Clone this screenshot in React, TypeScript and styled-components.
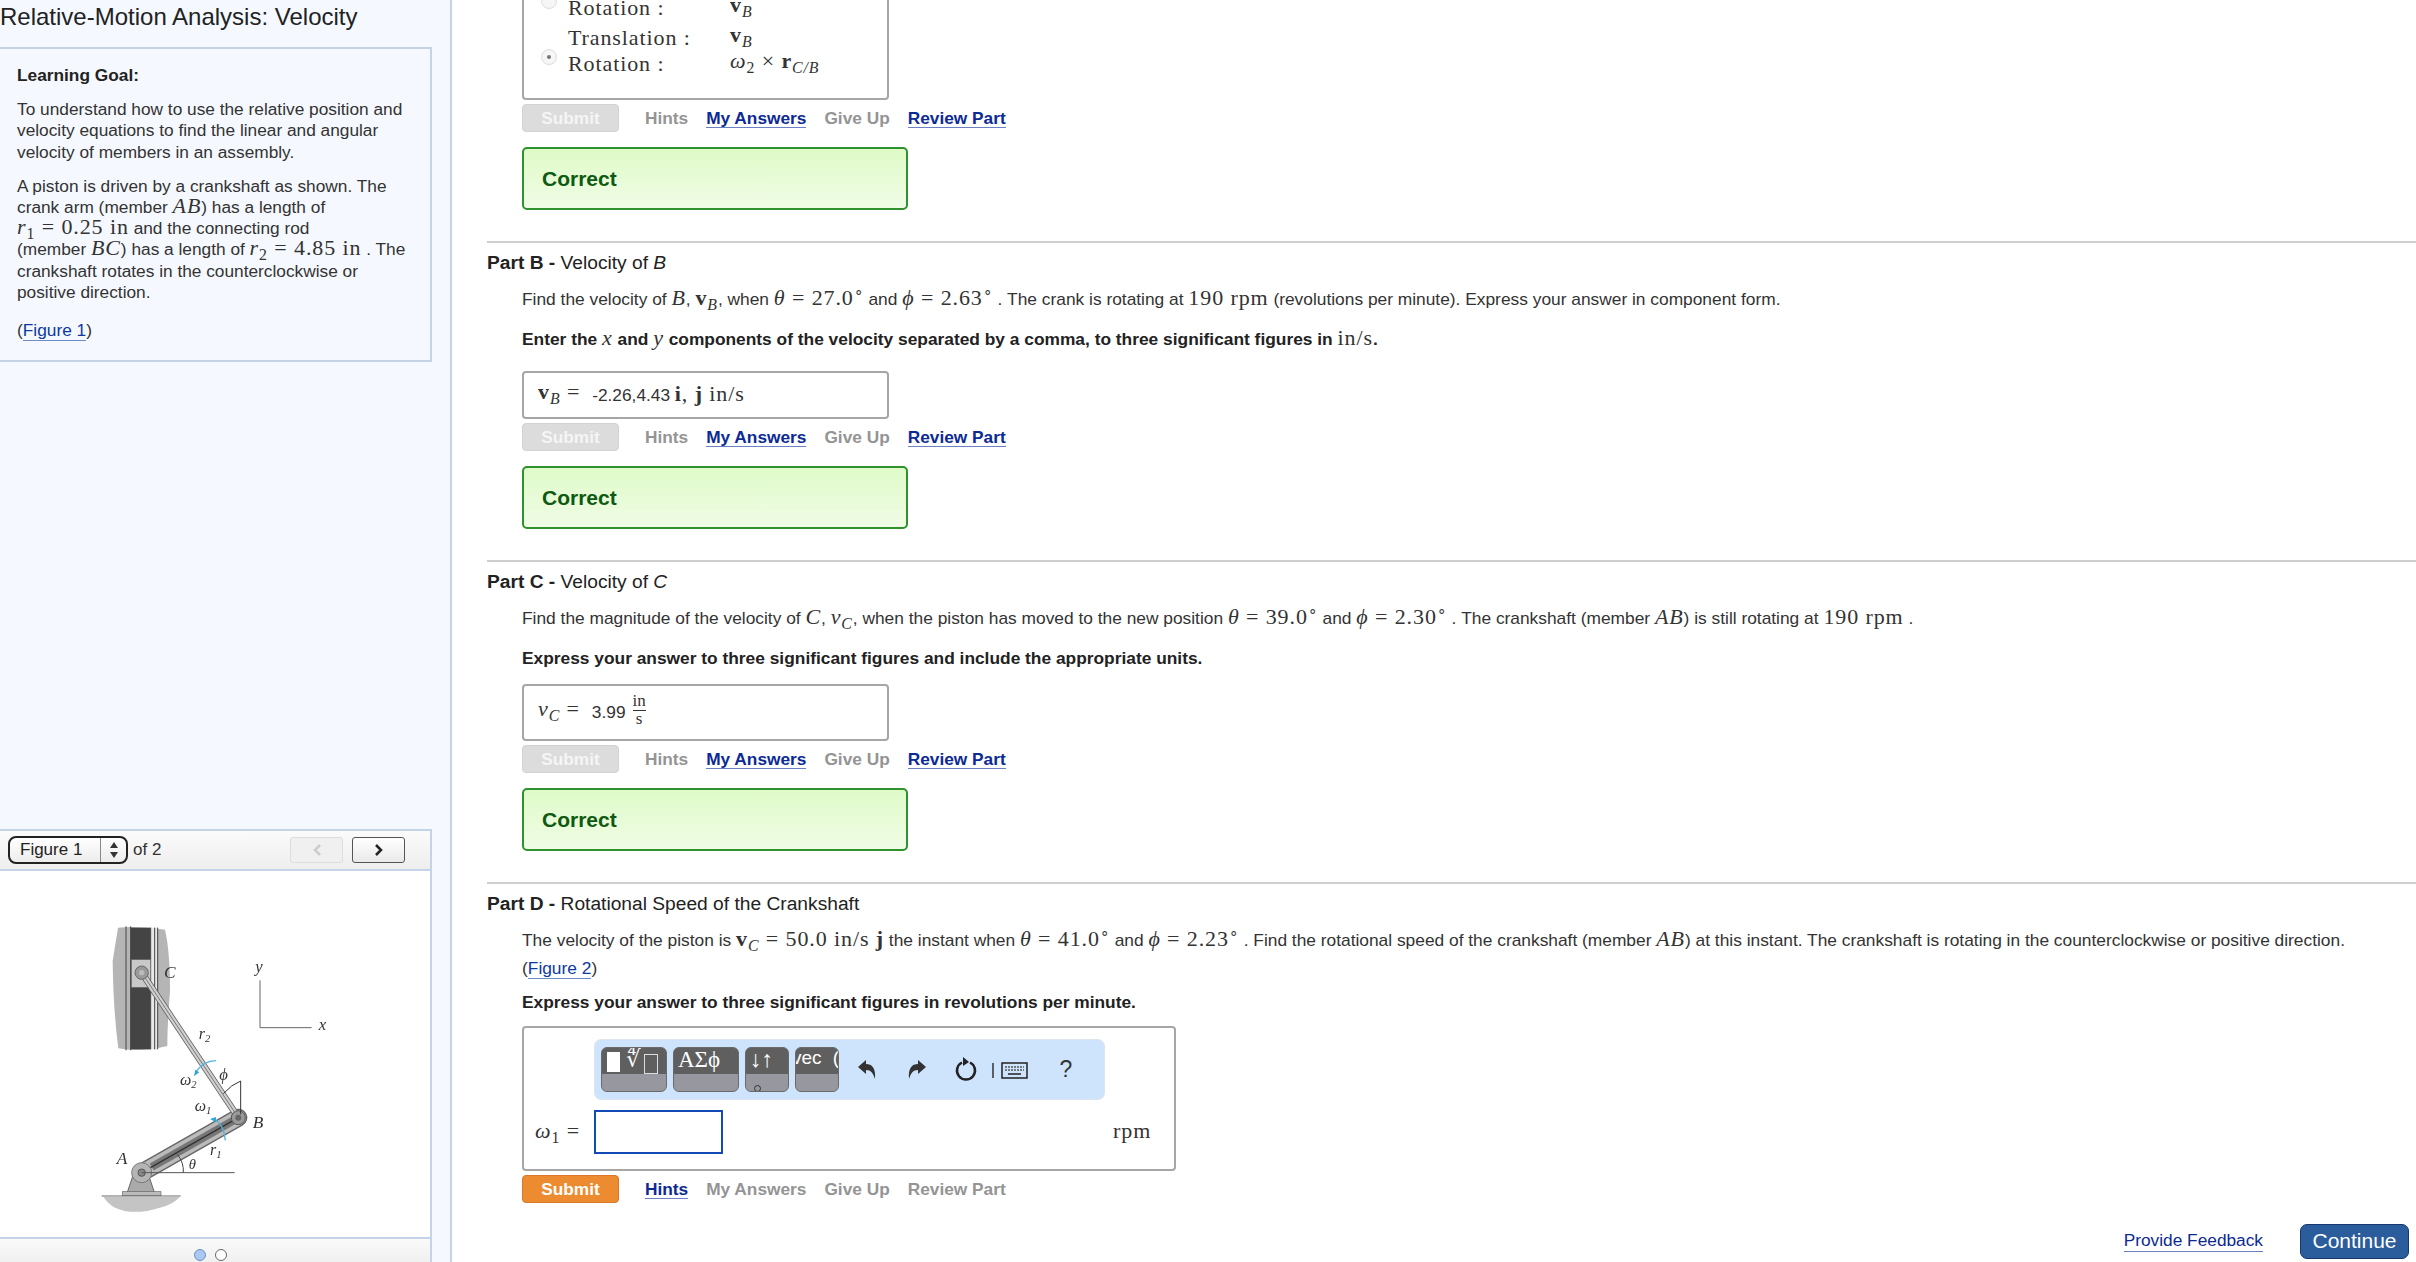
import styled, { createGlobalStyle } from "styled-components";

const GlobalStyle = createGlobalStyle`
  html, body { margin: 0; padding: 0; background: #fff; }
  body { font-family: "Liberation Sans", Arial, sans-serif; color: #222; }
`;

const Page = styled.div`
  display: flex;
  width: 2416px;
  height: 1262px;
  overflow: hidden;
`;

const Sidebar = styled.aside`
  flex: 0 0 452px;
  box-sizing: border-box;
  height: 1262px;
  display: flex;
  flex-direction: column;
  padding-right: 18px;
  background: #f5f9ff;
  border-right: 2px solid #c4d3e6;
`;

const Title = styled.h1`
  margin: 0;
  height: 47px;
  font-size: 24px;
  line-height: 34px;
  font-weight: normal;
  color: #222;
  white-space: nowrap;
`;

const GoalBox = styled.div`
  box-sizing: border-box;
  height: 315px;
  padding: 16px 0 0 17px;
  border: 2px solid #c4d3e6;
  border-left: 0;
  font-size: 17.3px;
  line-height: 21.2px;
  color: #333;
  white-space: nowrap;
`;

const GoalHeading = styled.div`
  font-weight: bold;
  color: #222;
`;

const GoalText = styled.p<{ $top: number }>`
  margin: ${(p) => p.$top}px 0 0;
`;

const FigurePanel = styled.section`
  margin-top: auto;
  height: 431px;
  display: flex;
  flex-direction: column;
  border: solid #c4d3e6;
  border-width: 2px 2px 0 0;
`;

const FigureBar = styled.div`
  flex: 0 0 38px;
  display: flex;
  align-items: center;
  padding-left: 8px;
  background: linear-gradient(#fbfbfb, #eeeeee);
  border-bottom: 2px solid #c4d3e6;
  font-size: 17px;
  color: #333;
`;

const FigureSelect = styled.div`
  box-sizing: border-box;
  width: 120px;
  height: 28px;
  display: flex;
  align-items: center;
  justify-content: space-between;
  padding-left: 10px;
  margin-right: 5px;
  border: 2px solid #222;
  border-radius: 8px;
  background: linear-gradient(#fff, #ececec);
  color: #222;
`;

const SelectArrows = styled.span`
  width: 25px;
  height: 24px;
  display: flex;
  align-items: center;
  justify-content: center;
  border-left: 1px solid #888;
`;

const NavButton = styled.button<{ $off?: boolean; $left: number }>`
  width: 53px;
  height: 26px;
  margin-left: ${(p) => p.$left}px;
  padding: 0;
  display: flex;
  align-items: center;
  justify-content: center;
  border-radius: 3px;
  background: ${(p) => (p.$off ? "#f0f0f0" : "linear-gradient(#fff, #e9e9e9)")};
  border: ${(p) => (p.$off ? "1px solid #ddd" : "1px solid #555")};
`;

const FigureImage = styled.div`
  flex: 1;
  display: flex;
  background: #fff;
  padding: 40px 0 0 90px;
`;

const FigureDrawing = styled.svg`
  filter: blur(0.6px);
`;

const FigureDots = styled.div`
  flex: 0 0 22px;
  display: flex;
  align-items: flex-end;
  justify-content: center;
  gap: 9px;
  background: linear-gradient(#fafafa, #f0f0f0);
  border-top: 2px solid #c4d3e6;
  padding: 0 10px 1px 0;
`;

const Dot = styled.span<{ $on?: boolean }>`
  box-sizing: border-box;
  width: 12px;
  height: 12px;
  border-radius: 50%;
  border: 1.5px solid ${(p) => (p.$on ? "#6f93bd" : "#666")};
  background: ${(p) => (p.$on ? "#a9c8f2" : "#fff")};
`;

const Main = styled.main`
  flex: 1;
  min-width: 0;
  padding-left: 35px;
  font-size: 17.35px;
  color: #333;
`;

const Part = styled.section`
  box-sizing: border-box;
  border-top: 2px solid #cfcfcf;
  padding-top: 9px;
`;

const PartTop = styled.section``;

const PartTitle = styled.h2`
  margin: 0;
  font-size: 19.2px;
  line-height: 22px;
  font-weight: normal;
  color: #222;
  b { font-weight: bold; }
`;

const PartBody = styled.div`
  padding-left: 35px;
`;

const Statement = styled.p`
  margin: 11px 0 0;
  line-height: 28px;
  white-space: nowrap;
`;

const Instruction = styled.p<{ $top: number }>`
  margin: ${(p) => p.$top}px 0 0;
  line-height: 24px;
  font-weight: bold;
  color: #222;
  white-space: nowrap;
`;

const Math = styled.span`
  font-family: "Liberation Serif", serif;
  font-size: 22px;
  letter-spacing: 0.9px;
  line-height: 0;
  font-weight: normal;
  color: #333;
`;

const V = styled.i`
  font-family: "Liberation Serif", serif;
`;

const Vec = styled.b`
  font-family: "Liberation Serif", serif;
  font-weight: bold;
`;

const Sub = styled.sub`
  font-size: 0.72em;
  line-height: 0;
  vertical-align: -0.3em;
`;

const Degree = styled.sup`
  font-size: 0.7em;
  line-height: 0;
  vertical-align: 0.55em;
`;

const AnswerBox = styled.div<{ $top: number; $height: number }>`
  box-sizing: border-box;
  width: 367px;
  height: ${(p) => p.$height}px;
  margin-top: ${(p) => p.$top}px;
  display: flex;
  align-items: center;
  padding-left: 14px;
  gap: 12px;
  border: 2px solid #a6a6a6;
  border-radius: 4px;
  background: #fff;
  font-size: 17.3px;
`;

const ChoiceBox = styled.div`
  box-sizing: border-box;
  width: 367px;
  height: 140px;
  margin-top: -40px;
  padding: 7px 0 0 17px;
  border: 2px solid #a6a6a6;
  border-radius: 4px;
`;

const Choice = styled.div<{ $top?: number }>`
  display: flex;
  align-items: flex-end;
  gap: 11px;
  margin-top: ${(p) => p.$top ?? 0}px;
`;

const Radio = styled.span<{ $on?: boolean }>`
  box-sizing: border-box;
  flex: 0 0 16px;
  height: 16px;
  margin-bottom: 12px;
  display: flex;
  align-items: center;
  justify-content: center;
  border-radius: 50%;
  border: 1px solid #ddd;
  background: #f6f6f6;
  &::after {
    content: "";
    display: ${(p) => (p.$on ? "block" : "none")};
    width: 4px;
    height: 4px;
    border-radius: 50%;
    background: #777;
  }
`;

const ChoiceLines = styled.div`
  display: grid;
  grid-template-columns: 162px auto;
  grid-auto-rows: 26px;
  align-items: center;
`;

const ActionRow = styled.div`
  height: 28px;
  margin-top: 4px;
  display: flex;
  align-items: center;
`;

const SubmitButton = styled.button<{ $active?: boolean }>`
  box-sizing: border-box;
  width: 97px;
  height: 28px;
  margin-right: 26px;
  padding: 0;
  border-radius: 4px;
  font: bold 17.3px "Liberation Sans", sans-serif;
  color: ${(p) => (p.$active ? "#fff" : "#f5f5f5")};
  background: ${(p) => (p.$active ? "#ec8b2f" : "#dcdcdc")};
  border: 1px solid ${(p) => (p.$active ? "#d9772a" : "#d2d2d2")};
`;

const ActionLink = styled.a<{ $on?: boolean }>`
  margin-right: 18px;
  font-size: 17.3px;
  font-weight: bold;
  color: ${(p) => (p.$on ? "#0c2a94" : "#949494")};
  border-bottom: ${(p) => (p.$on ? "1px solid #6c80c4" : "1px solid transparent")};
  line-height: 18px;
`;

const CorrectBox = styled.div`
  box-sizing: border-box;
  width: 386px;
  height: 63px;
  margin: 15px 0 31px;
  display: flex;
  align-items: center;
  padding-left: 18px;
  border: 2px solid #2f922f;
  border-radius: 5px;
  background: linear-gradient(#dffbc8, #f0fce6);
  font-size: 21px;
  font-weight: bold;
  color: #0e5a12;
`;

const FigureLink = styled.a`
  color: #0c3aa0;
  border-bottom: 1px solid #6c8bc8;
`;

const Fraction = styled.span`
  display: inline-flex;
  flex-direction: column;
  align-items: center;
  margin: -6px 0 0 -5px;
  font-family: "Liberation Serif", serif;
  font-size: 17px;
  line-height: 16px;
  color: #333;
`;

const FractionTop = styled.span`
  border-bottom: 1px solid #333;
  padding-bottom: 1px;
`;

const MathEditor = styled.div`
  box-sizing: border-box;
  width: 654px;
  height: 145px;
  margin-top: 12px;
  padding: 11px 0 0 70px;
  border: 2px solid #a6a6a6;
  border-radius: 4px;
`;

const Toolbar = styled.div`
  box-sizing: border-box;
  width: 511px;
  height: 61px;
  display: flex;
  align-items: center;
  padding-left: 6px;
  border: 1px solid #dfe5ec;
  border-radius: 7px;
  background: #cee4fd;
`;

const PaletteButton = styled.div<{ $width: number }>`
  box-sizing: border-box;
  position: relative;
  flex: 0 0 ${(p) => p.$width}px;
  height: 45px;
  margin-right: 6px;
  overflow: hidden;
  border: 1px solid #6a6a6a;
  border-radius: 6px;
  background: linear-gradient(#5f5f5f 0, #5f5f5f 60%, #97979f 60%, #97979f 100%);
  color: #fff;
  font-family: "Liberation Serif", serif;
  font-size: 23px;
  line-height: 24px;
  white-space: nowrap;
  display: flex;
  padding-left: 4px;
  gap: 3px;
`;

const WhiteSquare = styled.span`
  flex: 0 0 13px;
  height: 20px;
  margin: 4px 3px 0 1px;
  background: #fff;
`;

const OutlineSquare = styled.span`
  flex: 0 0 12px;
  height: 18px;
  margin-top: 6px;
  border: 1px solid #ddd;
`;

const VecLabel = styled.span`
  font-family: "Liberation Sans", sans-serif;
  font-size: 19px;
  margin-left: -8px;
  line-height: 20px;
  word-spacing: 6px;
`;

const SmallCircle = styled.span`
  position: absolute;
  left: 8px;
  bottom: -1px;
  width: 5px;
  height: 5px;
  border: 1px solid #333;
  border-radius: 50%;
`;

const ToolIcon = styled.span<{ $width: number }>`
  flex: 0 0 ${(p) => p.$width}px;
  display: flex;
  align-items: center;
  justify-content: center;
  color: #333;
  font-size: 23px;
`;

const EntryRow = styled.div`
  display: flex;
  align-items: center;
  height: 44px;
  margin: 10px 0 0 -62px;
`;

const EntryLabel = styled.span`
  flex: 0 0 59px;
  padding-left: 3px;
`;

const EntryInput = styled.div`
  box-sizing: border-box;
  width: 129px;
  height: 44px;
  border: 2px solid #1449b8;
  background: #fff;
`;

const EntryUnit = styled.span`
  margin-left: 390px;
`;

const Footer = styled.div`
  height: 36px;
  margin-top: 20px;
  display: flex;
  align-items: center;
  justify-content: flex-end;
  padding-right: 7px;
  gap: 37px;
`;

const FeedbackLink = styled.a`
  font-size: 17.3px;
  color: #0c2a94;
  border-bottom: 1px solid #6c80c4;
`;

const ContinueButton = styled.button`
  box-sizing: border-box;
  width: 109px;
  height: 35px;
  padding: 0;
  border: 1px solid #16386d;
  border-radius: 7px;
  background: #2b5c9b;
  color: #fff;
  font: 21px "Liberation Sans", sans-serif;
`;

function Actions({ active, review = true, answers = true }: { active?: boolean; review?: boolean; answers?: boolean }) {
  return (
    <ActionRow>
      <SubmitButton $active={active}>Submit</SubmitButton>
      <ActionLink $on={active}>Hints</ActionLink>
      <ActionLink $on={answers}>My Answers</ActionLink>
      <ActionLink>Give Up</ActionLink>
      <ActionLink $on={review}>Review Part</ActionLink>
    </ActionRow>
  );
}

function CrankFigure() {
  const label = { fontFamily: "Liberation Serif, serif", fontStyle: "italic", fill: "#333" } as const;
  return (
    <FigureDrawing width="280" height="310" viewBox="0 0 840 930">
      <path d="M84 50 Q140 44 225 56 Q240 120 240 240 Q232 340 232 405 Q150 425 85 412 Q70 300 68 150 Z" fill="#b5b5b5" />
      <rect x="122" y="50" width="60" height="365" fill="#444" />
      <rect x="182" y="50" width="21" height="365" fill="#e8e8e8" />
      <path d="M108 46V418M122 46V418M182 50V415M194 50V415M203 50V415" stroke="#444" strokeWidth="3" />
      <rect x="124" y="146" width="58" height="83" fill="#c9c9c9" stroke="#666" strokeWidth="2" />
      <path d="M155 785 L445 620" stroke="#666" strokeWidth="54" strokeLinecap="round" />
      <path d="M155 785 L445 620" stroke="#bbb" strokeWidth="46" strokeLinecap="round" />
      <path d="M185 768 L445 620" stroke="#777" strokeWidth="24" />
      <path d="M155 785 L445 620" stroke="#333" strokeWidth="4" />
      <path d="M110 850 L130 790 H175 L195 850 Z" fill="#aaa" stroke="#666" strokeWidth="3" />
      <rect x="97" y="842" width="116" height="12" fill="#bbb" stroke="#666" strokeWidth="2" />
      <circle cx="155" cy="785" r="30" fill="#b5b5b5" stroke="#777" strokeWidth="3" />
      <circle cx="155" cy="785" r="11" fill="#888" stroke="#555" strokeWidth="3" />
      <path d="M35 855H272" stroke="#666" strokeWidth="3" />
      <path d="M40 857 H270 Q250 880 210 890 Q130 915 75 890 Q55 880 40 857Z" fill="#c4c4c4" />
      <path d="M155 785H434" stroke="#555" strokeWidth="3" />
      <path d="M262 730 Q282 755 280 785" fill="none" stroke="#444" strokeWidth="3" />
      <path d="M155 185 L445 620" stroke="#666" strokeWidth="20" />
      <path d="M155 185 L445 620" stroke="#d0d0d0" strokeWidth="15" />
      <path d="M155 185 L445 620" stroke="#777" strokeWidth="3" />
      <circle cx="155" cy="185" r="20" fill="#999" stroke="#666" strokeWidth="3" />
      <circle cx="155" cy="185" r="8" fill="#bbb" />
      <circle cx="445" cy="620" r="21" fill="#999" stroke="#555" strokeWidth="3" />
      <circle cx="445" cy="620" r="9" fill="#666" />
      <path d="M452 510V610M400 548 Q425 520 452 510" fill="none" stroke="#333" strokeWidth="3" />
      <path d="M510 208V350H665" fill="none" stroke="#666" strokeWidth="3" />
      <path d="M378 449 Q340 450 318 482" fill="none" stroke="#4fb3de" strokeWidth="4" />
      <path d="M312 496 L316 476 L328 484Z" fill="#2ea6da" />
      <path d="M372 624 Q402 640 406 688" fill="none" stroke="#4fb3de" strokeWidth="4" />
      <path d="M360 624 L378 618 L378 634Z" fill="#2ea6da" />
      <text x="496" y="182" fontSize="50" {...label}>y</text>
      <text x="686" y="358" fontSize="50" {...label}>x</text>
      <text x="222" y="202" fontSize="52" {...label}>C</text>
      <text x="488" y="650" fontSize="52" {...label}>B</text>
      <text x="80" y="758" fontSize="52" {...label}>A</text>
      <text x="326" y="384" fontSize="48" {...label}>r<tspan fontSize="32" dy="10">2</tspan></text>
      <text x="360" y="732" fontSize="48" {...label}>r<tspan fontSize="32" dy="10">1</tspan></text>
      <text x="270" y="522" fontSize="48" {...label}>ω<tspan fontSize="32" dy="10">2</tspan></text>
      <text x="314" y="600" fontSize="48" {...label}>ω<tspan fontSize="32" dy="10">1</tspan></text>
      <text x="388" y="508" fontSize="50" {...label}>ϕ</text>
      <text x="296" y="774" fontSize="44" {...label}>θ</text>
    </FigureDrawing>
  );
}

export default function App() {
  return (
    <Page>
      <GlobalStyle />
      <Sidebar>
        <Title>Relative-Motion Analysis: Velocity</Title>
        <GoalBox>
          <GoalHeading>Learning Goal:</GoalHeading>
          <GoalText $top={13}>
            To understand how to use the relative position and
            <br />
            velocity equations to find the linear and angular
            <br />
            velocity of members in an assembly.
          </GoalText>
          <GoalText $top={13}>
            A piston is driven by a crankshaft as shown. The
            <br />
            crank arm (member <Math><V>AB</V></Math>) has a length of
            <br />
            <Math><V>r</V><Sub>1</Sub> = 0.25 in</Math> and the connecting rod
            <br />
            (member <Math><V>BC</V></Math>) has a length of <Math><V>r</V><Sub>2</Sub> = 4.85 in</Math> . The
            <br />
            crankshaft rotates in the counterclockwise or
            <br />
            positive direction.
          </GoalText>
          <GoalText $top={17}>
            (<FigureLink>Figure 1</FigureLink>)
          </GoalText>
        </GoalBox>
        <FigurePanel>
          <FigureBar>
            <FigureSelect>
              Figure 1
              <SelectArrows>
                <svg width="10" height="18" viewBox="0 0 10 18">
                  <path d="M5 1L9 7H1ZM5 17L1 11H9Z" fill="#333" />
                </svg>
              </SelectArrows>
            </FigureSelect>
            of 2
            <NavButton $off $left={129}>
              <svg width="10" height="14" viewBox="0 0 10 14">
                <path d="M8 2L3 7L8 12" fill="none" stroke="#ccc" strokeWidth="2.5" />
              </svg>
            </NavButton>
            <NavButton $left={9}>
              <svg width="10" height="14" viewBox="0 0 10 14">
                <path d="M2 2L7 7L2 12" fill="none" stroke="#222" strokeWidth="2.5" />
              </svg>
            </NavButton>
          </FigureBar>
          <FigureImage>
            <CrankFigure />
          </FigureImage>
          <FigureDots>
            <Dot $on />
            <Dot />
          </FigureDots>
        </FigurePanel>
      </Sidebar>
      <Main>
        <PartTop>
          <PartBody>
            <ChoiceBox>
              <Choice>
                <Radio />
                <ChoiceLines>
                  <Math>Translation :</Math>
                  <Math><Vec>v</Vec><Sub><V>B</V></Sub></Math>
                  <Math>Rotation :</Math>
                  <Math><Vec>v</Vec><Sub><V>B</V></Sub></Math>
                </ChoiceLines>
              </Choice>
              <Choice $top={4}>
                <Radio $on />
                <ChoiceLines>
                  <Math>Translation :</Math>
                  <Math><Vec>v</Vec><Sub><V>B</V></Sub></Math>
                  <Math>Rotation :</Math>
                  <Math><V>ω</V><Sub>2</Sub> × <Vec>r</Vec><Sub><V>C/B</V></Sub></Math>
                </ChoiceLines>
              </Choice>
            </ChoiceBox>
            <Actions />
            <CorrectBox>Correct</CorrectBox>
          </PartBody>
        </PartTop>
        <Part>
          <PartTitle><b>Part B -</b> Velocity of <i>B</i></PartTitle>
          <PartBody>
            <Statement>
              Find the velocity of <Math><V>B</V></Math>, <Math><Vec>v</Vec><Sub><V>B</V></Sub></Math>, when <Math><V>θ</V> = 27.0<Degree>∘</Degree></Math> and <Math><V>ϕ</V> = 2.63<Degree>∘</Degree></Math> . The crank is rotating at <Math>190 rpm</Math> (revolutions per minute). Express your answer in component form.
            </Statement>
            <Instruction $top={14}>
              Enter the <Math><V>x</V></Math> and <Math><V>y</V></Math> components of the velocity separated by a comma, to three significant figures in <Math>in/s</Math>.
            </Instruction>
            <AnswerBox $top={20} $height={48}>
              <Math><Vec>v</Vec><Sub><V>B</V></Sub> =</Math>
              <span>-2.26,4.43 <Math><Vec>i</Vec>, <Vec>j</Vec> in/s</Math></span>
            </AnswerBox>
            <Actions />
            <CorrectBox>Correct</CorrectBox>
          </PartBody>
        </Part>
        <Part>
          <PartTitle><b>Part C -</b> Velocity of <i>C</i></PartTitle>
          <PartBody>
            <Statement>
              Find the magnitude of the velocity of <Math><V>C</V></Math>, <Math><V>v</V><Sub><V>C</V></Sub></Math>, when the piston has moved to the new position <Math><V>θ</V> = 39.0<Degree>∘</Degree></Math> and <Math><V>ϕ</V> = 2.30<Degree>∘</Degree></Math> . The crankshaft (member <Math><V>AB</V></Math>) is still rotating at <Math>190 rpm</Math> .
            </Statement>
            <Instruction $top={14}>Express your answer to three significant figures and include the appropriate units.</Instruction>
            <AnswerBox $top={14} $height={57}>
              <Math><V>v</V><Sub><V>C</V></Sub> =</Math>
              <span>3.99</span>
              <Fraction>
                <FractionTop>in</FractionTop>
                <span>s</span>
              </Fraction>
            </AnswerBox>
            <Actions />
            <CorrectBox>Correct</CorrectBox>
          </PartBody>
        </Part>
        <Part>
          <PartTitle><b>Part D -</b> Rotational Speed of the Crankshaft</PartTitle>
          <PartBody>
            <Statement>
              The velocity of the piston is <Math><Vec>v</Vec><Sub><V>C</V></Sub> = 50.0 in/s <Vec>j</Vec></Math> the instant when <Math><V>θ</V> = 41.0<Degree>∘</Degree></Math> and <Math><V>ϕ</V> = 2.23<Degree>∘</Degree></Math> . Find the rotational speed of the crankshaft (member <Math><V>AB</V></Math>) at this instant. The crankshaft is rotating in the counterclockwise or positive direction.
              <br />
              (<FigureLink>Figure 2</FigureLink>)
            </Statement>
            <Instruction $top={8}>Express your answer to three significant figures in revolutions per minute.</Instruction>
            <MathEditor>
              <Toolbar>
                <PaletteButton $width={66}>
                  <WhiteSquare />∜<OutlineSquare />
                </PaletteButton>
                <PaletteButton $width={66}>ΑΣϕ</PaletteButton>
                <PaletteButton $width={44}>↓↑<SmallCircle /></PaletteButton>
                <PaletteButton $width={44}><VecLabel>vec (</VecLabel></PaletteButton>
                <ToolIcon $width={44}>
                  <svg width="20" height="24" viewBox="0 0 20 24">
                    <path d="M1 9L9 2V6C15 6 19 10 18 21C16 15 14 12 9 12V16Z" fill="#333" />
                  </svg>
                </ToolIcon>
                <ToolIcon $width={56}>
                  <svg width="20" height="24" viewBox="0 0 20 24">
                    <path d="M19 9L11 2V6C5 6 1 10 2 21C4 15 6 12 11 12V16Z" fill="#333" />
                  </svg>
                </ToolIcon>
                <ToolIcon $width={42}>
                  <svg width="24" height="28" viewBox="0 0 24 28">
                    <path d="M8 6.5A9 9 0 1 0 16 6.5" fill="none" stroke="#222" strokeWidth="2.5" />
                    <path d="M9 1L15 6L9 10Z" fill="#222" />
                  </svg>
                </ToolIcon>
                <ToolIcon $width={46}>
                  <svg width="36" height="18" viewBox="0 0 36 18">
                    <path d="M1 2V17" stroke="#333" strokeWidth="1.5" />
                    <rect x="10" y="2" width="25" height="15" fill="#cee4fd" stroke="#222" strokeWidth="1.5" />
                    <path d="M13 6H32M13 9H32" stroke="#555" strokeWidth="1.5" strokeDasharray="2 1" />
                    <path d="M16 13H29" stroke="#222" strokeWidth="1.5" />
                  </svg>
                </ToolIcon>
                <ToolIcon $width={66}>?</ToolIcon>
              </Toolbar>
              <EntryRow>
                <EntryLabel><Math><V>ω</V><Sub>1</Sub> =</Math></EntryLabel>
                <EntryInput />
                <EntryUnit><Math>rpm</Math></EntryUnit>
              </EntryRow>
            </MathEditor>
            <Actions active review={false} answers={false} />
          </PartBody>
        </Part>
        <Footer>
          <FeedbackLink>Provide Feedback</FeedbackLink>
          <ContinueButton>Continue</ContinueButton>
        </Footer>
      </Main>
    </Page>
  );
}
